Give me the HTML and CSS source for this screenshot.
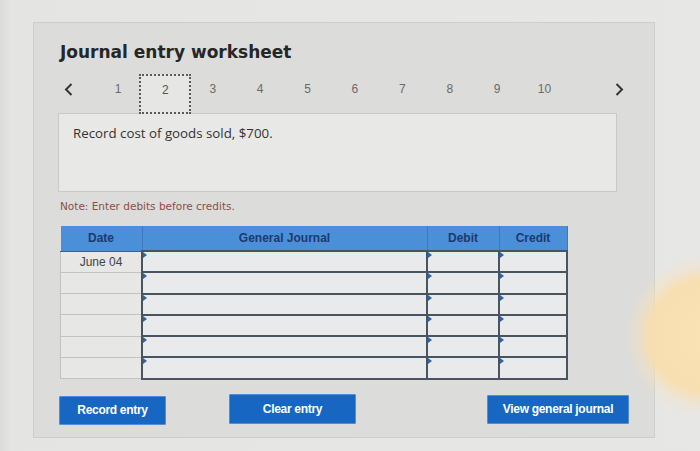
FILE: index.html
```
<!DOCTYPE html>
<html>
<head>
<meta charset="utf-8">
<link rel="stylesheet" href="styles.css">
</head>
<body>
<div class="screen">
  <div class="panel">
    <h1 class="title">Journal entry worksheet</h1>
    <div class="nav">
      <div class="prev"><svg width="9" height="13" viewBox="0 0 9 13"><path d="M7.5 1 L2 6.5 L7.5 12" fill="none" stroke="#333" stroke-width="2"/></svg></div>
      <div class="step">1</div>
      <div class="step active">2</div>
      <div class="step">3</div>
      <div class="step">4</div>
      <div class="step">5</div>
      <div class="step">6</div>
      <div class="step">7</div>
      <div class="step">8</div>
      <div class="step">9</div>
      <div class="step">10</div>
      <div class="next"><svg width="9" height="13" viewBox="0 0 9 13"><path d="M1.5 1 L7 6.5 L1.5 12" fill="none" stroke="#333" stroke-width="2"/></svg></div>
    </div>
    <div class="task">Record cost of goods sold, $700.</div>
    <p class="note">Note: Enter debits before credits.</p>
    <table class="journal">
      <thead>
        <tr><th class="c-date">Date</th><th class="c-gj">General Journal</th><th class="c-dr">Debit</th><th class="c-cr">Credit</th></tr>
      </thead>
      <tbody>
        <tr><td class="date">June 04</td><td class="inp"></td><td class="inp"></td><td class="inp"></td></tr>
        <tr><td class="date"></td><td class="inp"></td><td class="inp"></td><td class="inp"></td></tr>
        <tr><td class="date"></td><td class="inp"></td><td class="inp"></td><td class="inp"></td></tr>
        <tr><td class="date"></td><td class="inp"></td><td class="inp"></td><td class="inp"></td></tr>
        <tr><td class="date"></td><td class="inp"></td><td class="inp"></td><td class="inp"></td></tr>
        <tr><td class="date"></td><td class="inp"></td><td class="inp"></td><td class="inp"></td></tr>
      </tbody>
    </table>
    <div class="actions">
      <button class="btn btn-record">Record entry</button>
      <button class="btn btn-clear">Clear entry</button>
      <button class="btn btn-view">View general journal</button>
    </div>
  </div>
</div>
<div class="glare"></div>
</body>
</html>
```

FILE: styles.css
```
html, body {
  margin: 0;
  padding: 0;
}
body {
  width: 700px;
  height: 451px;
  overflow: hidden;
  background: linear-gradient(90deg, #dcdcda 0, #e4e4e2 12px, #e7e7e5 100%);
  font-family: "Liberation Sans", Arial, sans-serif;
  position: relative;
}
.screen {
  padding: 22px 0 0 33px;
}
.panel {
  box-sizing: border-box;
  width: 622px;
  height: 416px;
  background: #dcdcda;
  border: 1px solid #cdcdcb;
  padding: 0 0 0 26px;
}
.title {
  margin: 19px 0 0 0;
  font-family: "DejaVu Sans", Verdana, sans-serif;
  font-weight: bold;
  font-size: 17px;
  line-height: 20px;
  color: #262626;
}
.nav {
  margin-top: 12px;
  height: 40px;
  display: flex;
}
.prev {
  width: 34.3px;
  box-sizing: border-box;
  padding: 8px 0 0 4px;
}
.next {
  margin-left: 47px;
  padding-top: 8px;
}
.step {
  width: 47.4px;
  text-align: center;
  font-size: 12px;
  line-height: 31px;
  color: #6a6a6a;
}
.step.active {
  box-sizing: border-box;
  width: 52px;
  margin: 0 -2.3px;
  height: 40px;
  border: 2px dotted #5a5a5a;
  background: #e6e6e4;
  line-height: 29px;
  color: #555;
  position: relative;
  z-index: 1;
}
.task {
  box-sizing: border-box;
  margin: -1px 0 0 -2px;
  width: 559px;
  height: 79px;
  background: #e8e8e6;
  border: 1px solid #c9c9c7;
  padding: 10px 14px;
  font-family: "Open Sans", sans-serif;
  font-size: 13.3px;
  line-height: 18px;
  color: #333;
}
.note {
  margin: 7px 0 0 0;
  font-family: "DejaVu Sans", Verdana, sans-serif;
  font-size: 10.5px;
  line-height: 15px;
  color: #8a4f48;
}
.journal {
  margin-top: 12px;
  border-collapse: collapse;
  width: 503px;
  table-layout: fixed;
}
.journal th {
  height: 24px;
  padding: 0;
  background: #4b8fd8;
  color: #1d3a6e;
  font-size: 12px;
  font-weight: bold;
  border-right: 1px solid #3d79c2;
  border-bottom: 1px solid #3a5f8c;
}
.c-date { width: 81px; }
.c-gj { width: 284px; }
.c-dr { width: 71px; }
.c-cr { width: 67px; }
.journal td {
  height: 19.3px;
  padding: 0;
}
.journal td.date {
  background: #e7e7e5;
  border: 1px solid #c2c2c0;
  text-align: center;
  font-size: 12px;
  color: #444;
  vertical-align: middle;
}
.journal td.inp {
  background: #e9eaeb;
  border: 2px solid #4a545e;
  position: relative;
}
.journal td.inp::before {
  content: "";
  position: absolute;
  left: 0;
  top: 0;
  border-left: 4px solid #2f62a8;
  border-top: 3px solid transparent;
  border-bottom: 3px solid transparent;
}
.actions {
  display: flex;
  align-items: flex-start;
  margin-top: 15px;
}
.btn {
  box-sizing: border-box;
  background: #1767c2;
  border: 1px solid #4f8fd9;
  border-radius: 1px;
  color: #fff;
  font-family: "Liberation Sans", Arial, sans-serif;
  font-weight: bold;
  font-size: 12px;
  letter-spacing: -0.3px;
  padding: 0;
}
.btn-record {
  width: 107px;
  height: 29px;
  margin: 1px 0 0 -1px;
}
.btn-clear {
  width: 127px;
  height: 30px;
  margin-left: 63px;
  margin-top: -1px;
}
.btn-view {
  width: 142px;
  height: 29px;
  margin-left: 131px;
}
.glare {
  position: absolute;
  left: 600px;
  top: 240px;
  width: 100px;
  height: 200px;
  background: radial-gradient(circle 90px at 106px 96px, rgba(251, 226, 180, 0.97) 0, rgba(250, 222, 172, 0.9) 62%, rgba(245, 225, 192, 0.45) 76%, rgba(240, 230, 210, 0) 90%);
  pointer-events: none;
}
```
